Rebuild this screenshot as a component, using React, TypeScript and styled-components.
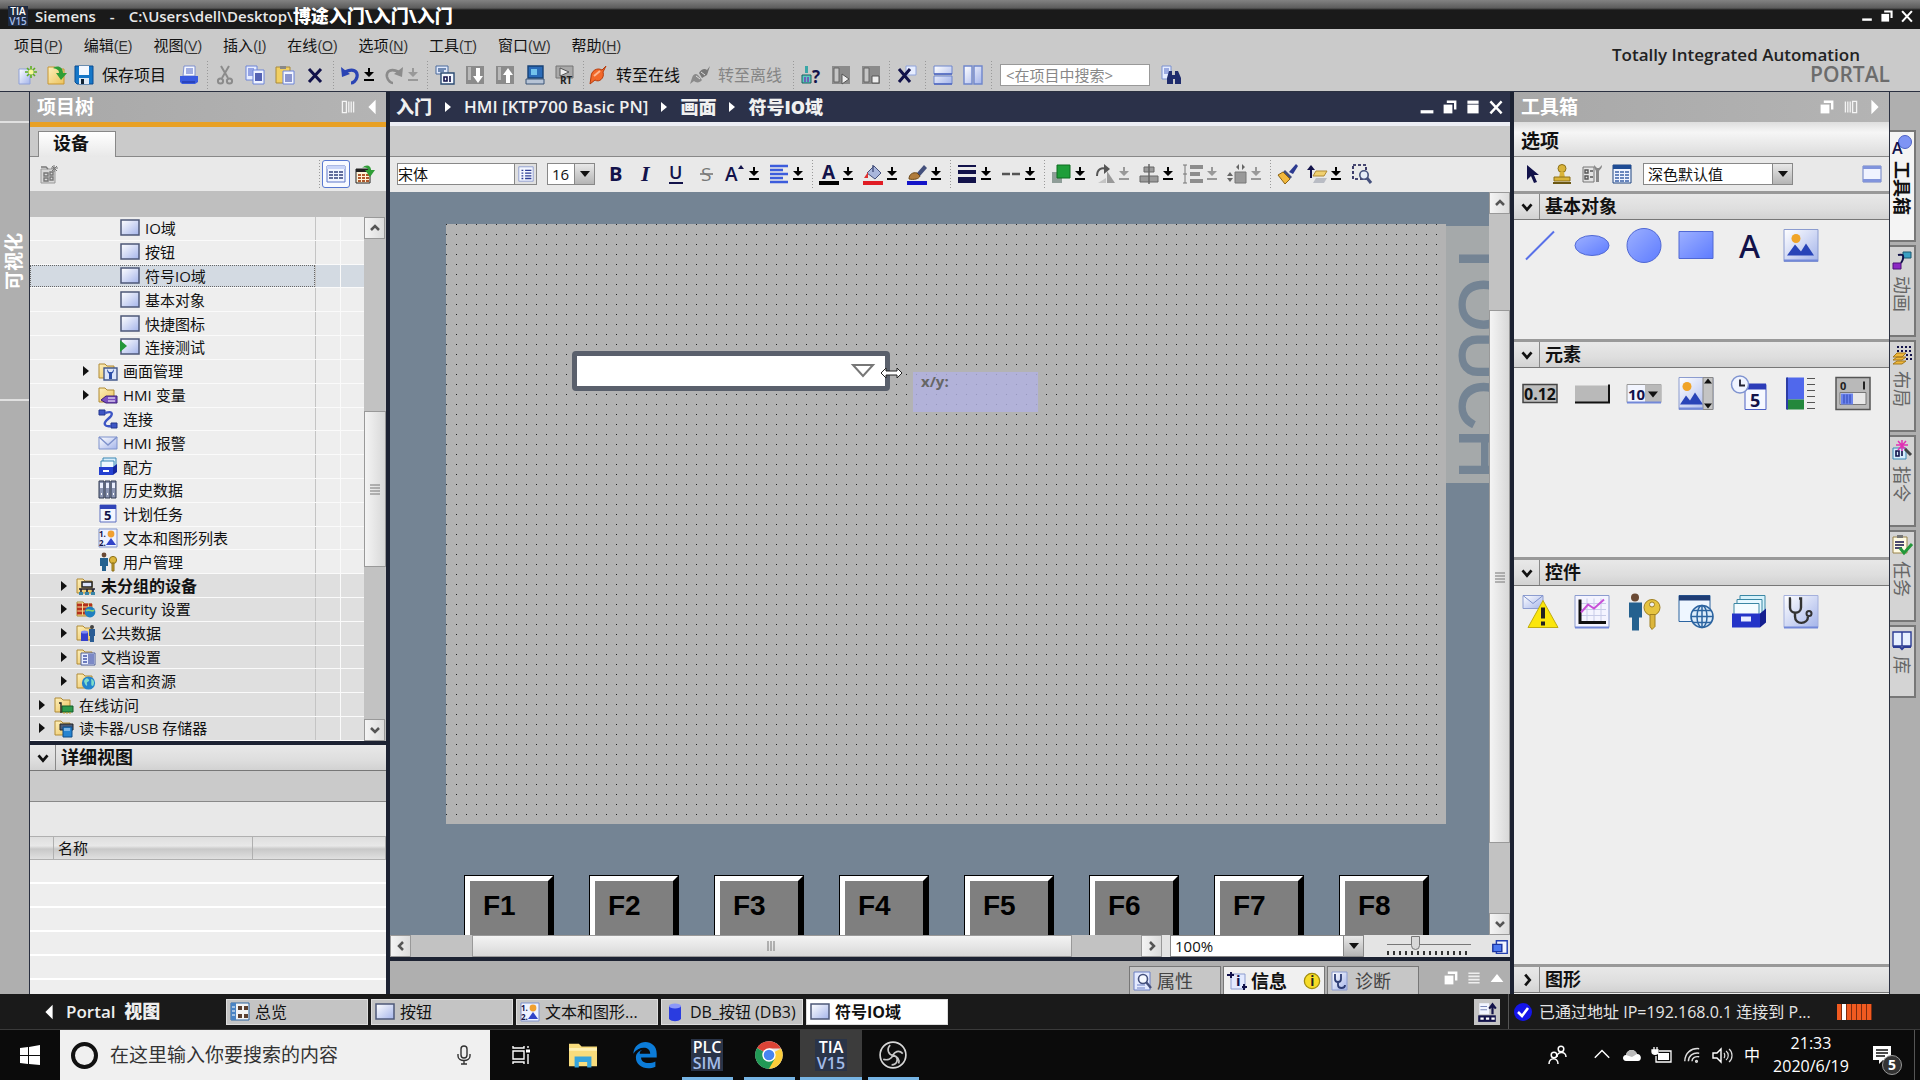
import React from 'react';
import styled, { createGlobalStyle, css } from 'styled-components';

const NAVY = '#12124a';

const Global = createGlobalStyle`
  * { box-sizing: border-box; }
  body {
    margin: 0;
    background: #0b0b0b;
    color: #111;
    font: 16px/20px 'Open Sans', 'Noto Sans CJK SC', sans-serif;
  }
  button, input, select { font: inherit; color: inherit; margin: 0; padding: 0; border: 0; border-radius: 0; background: none; }
  svg { display: block; flex: none; overflow: visible; }
  ul { list-style: none; margin: 0; padding: 0; }
`;

/* ---------- icons ---------- */

const folder = <path d="M1 3h6l2 2h7v12H1z" fill="url(#gFolder)" stroke="#b08a34" />;
const screen = <path d="M1 2h18v15H1z" fill="url(#gScreen)" stroke="#4d5878" strokeWidth="1.5" />;
const grey = '#8b8b8b';

const art: Record<string, React.ReactNode> = {
  newProject: <><path d="M2 4h11v15H2z" fill="url(#gScreen)" stroke="#8ea0d8" /><path d="M14 1v12M8 7h12M10 3l8 8M18 3l-8 8" stroke="#5fae1e" strokeWidth="1.6" /><circle cx="14" cy="7" r="2.5" fill="#fbf89a" /></>,
  openProject: <><path d="M1 2h7l2 2h7v15H1z" fill="url(#gFolder)" stroke="#c79632" /><path d="M6 3c5-3 10-1 10 5h4l-6 7-5-7h3c0-3-2-4-6-5z" fill="#2f9e37" /></>,
  save: <><path d="M1 1h18v18H3l-2-2z" fill="#1677c8" stroke="#0b4d92" /><path d="M5 1h10v9H5z" fill="#f4f8ff" /><path d="M5 13h10v6H5z" fill="#dfe9f5" /><path d="M7 14h3v5H7z" fill="#123" /></>,
  print: <><path d="M5 1h11v10H4z" fill="#f6f8ff" stroke="#7d8fce" /><path d="M7 4h7M7 6h7M7 8h7" stroke="#4c64c4" /><path d="M1 11h18v6l-3 2H3l-2-2z" fill="#3a5be0" /><path d="M3 17h13" stroke="#1b2f98" /></>,
  cut: <g stroke={grey} fill="none" strokeWidth="2"><path d="M6 1l7 12M14 1L7 13" /><circle cx="5.5" cy="16" r="2.6" /><circle cx="14.5" cy="16" r="2.6" /></g>,
  copy: <><path d="M1 1h11v14H1z" fill="#e7edff" stroke="#6d84d8" /><path d="M3 4h6M3 6h6M3 8h6M3 10h6" stroke="#4059c8" /><path d="M8 5h11v14H8z" fill="#eef2ff" stroke="#6d84d8" /><path d="M10 9h7M10 11h7M10 13h7M10 15h7" stroke="#23349c" strokeWidth="1.3" /></>,
  paste: <><path d="M1 2h14v16H1z" fill="#f1cf62" stroke="#a88a3a" /><path d="M5 1h6v3H5z" fill="#888" /><path d="M8 6h11v13H8z" fill="#f2f5ff" stroke="#6d84d8" /><path d="M10 10h7M10 12h7M10 14h7M10 16h7" stroke="#23349c" /></>,
  cross: <path d="M4 4l12 13M16 4L4 17" stroke={NAVY} strokeWidth="3" />,
  undo: <><path d="M5 7c8-4 13-1 12 5-1 4-4 6-6 6" fill="none" stroke="#2a44b4" strokeWidth="3.2" /><path d="M1 2l1 10 8-3z" fill="#2a44b4" /></>,
  redo: <><path d="M15 7C7 3 2 6 3 12c1 4 4 6 6 6" fill="none" stroke={grey} strokeWidth="2.6" /><path d="M19 2l-1 10-8-3z" fill={grey} /></>,
  compile: <><path d="M1 1h12v8H1z" fill="#dfe8fb" stroke="#4b6a9c" /><path d="M3 4h8M3 6h6" stroke="#4b6a9c" strokeWidth="1.5" /><path d="M6 8h13v11H6z" fill="#f4f8ff" stroke="#2c4c74" strokeWidth="1.4" /><path d="M9 12h3v4H9zM15 11v6" fill="none" stroke={NAVY} strokeWidth="1.6" /></>,
  download: <><path d="M1 1h18v18H1z" fill={grey} /><path d="M3 2h3v13H3z" fill="#b9b9b9" /><path d="M11 3h4v8h3l-5 7-5-7h3z" fill="#fff" /></>,
  upload: <><path d="M1 1h18v18H1z" fill={grey} /><path d="M3 2h3v13H3z" fill="#b9b9b9" /><path d="M11 18h4v-8h3l-5-7-5 7h3z" fill="#fff" /></>,
  simulate: <><path d="M3 1h15v12H3z" fill="#2a6bb8" stroke="#174276" strokeWidth="1.4" /><path d="M6 4h6v6H6z" fill="#72c2ec" /><path d="M1 14h18v5H1z" fill="#b7c4d6" stroke="#3b5576" /></>,
  runtime: <><path d="M1 1h17v12H1z" fill="#a9a9a9" stroke="#757575" /><path d="M5 3l9 4-9 4z" fill="#eee" stroke="#555" /><text x="5" y="19" fontSize="10" fontWeight="700" fill="#222" fontFamily="Open Sans">RT</text></>,
  plug: <><path d="M3 12C3 6 9 2 14 5l4-4-3 6c2 6-4 11-8 8l-5 4z" fill="#f2682a" stroke="#b63c0c" /><path d="M6 11l6-5" stroke="#ffb68e" strokeWidth="2" /></>,
  unplug: <><path d="M9 8c2-4 6-5 8-3l3-4-3 9-5 3z" fill="#777" /><path d="M2 13c1-4 4-5 6-3l4 5c-2 3-6 3-8 1l-4 3z" fill={grey} /><path d="M6 11l4 3M11 7l4 3" stroke="#ddd" /></>,
  access: <><path d="M4 1h3v7H4z" fill="#3aa7a7" /><path d="M1 10h9v8H1z" fill="#5bc8c0" stroke="#19605e" /><path d="M4 12v5M7 12v5" stroke="#7a3fb4" strokeWidth="1.5" /><text x="11" y="18" fontSize="17" fontWeight="700" fill={NAVY} fontFamily="Open Sans">?</text></>,
  startCpu: <><path d="M1 1h18v18H1z" fill={grey} /><path d="M3 3h5v14H3z" fill="#c6c6c6" stroke="#666" /><path d="M11 9l7 5-7 5z" fill="#eee" stroke="#555" /></>,
  stopCpu: <><path d="M1 1h18v18H1z" fill={grey} /><path d="M3 3h5v14H3z" fill="#c6c6c6" stroke="#666" /><path d="M11 11h7v7h-7z" fill="#eee" stroke="#555" /></>,
  closeAll: <><path d="M9 1h10v9H9z" fill="#e6edff" stroke="#90a4dc" /><path d="M2 4l11 13M13 4L2 17" stroke={NAVY} strokeWidth="3" /></>,
  splitH: <><path d="M1 1h18v8H1zM1 11h18v8H1z" fill="url(#gScreen)" stroke="#6f86cc" /><path d="M1 9h18M1 19h18" stroke="#4d66c0" strokeWidth="1.5" /></>,
  splitV: <path d="M1 1h8v18H1zM11 1h8v18h-8z" fill="url(#gScreen)" stroke="#6f86cc" strokeWidth="1.4" />,
  binoculars: <><path d="M1 1h9v13H1z" fill="#e6edff" stroke="#7a90d0" /><path d="M3 4h5M3 6h5M3 8h5" stroke="#5069c4" /><path d="M8 6h3v4h3V6h3l3 7v6h-6v-5h-2v5H6v-6z" fill="#1f2c6c" /></>,

  addDevice: <><path d="M2 5h14v14H2z" fill="#d8d8d8" stroke="#999" /><path d="M5 9h4v3H5zM5 14h4v3H5zM11 8h3v3h-3zM11 13h3v3h-3zM2 3h5l2 2" fill="none" stroke="#777" strokeWidth="1.4" /><path d="M15 1v7M12 4h7M13 2l5 5M18 2l-5 5" stroke="#777" /></>,
  details: <><path d="M1 2h18v16H1z" fill="#f3f6ff" stroke="#5c76c8" /><path d="M1 2h18v3H1z" fill="#c9d5f8" /><path d="M3 8h4M8 8h4M13 8h4M3 11h4M8 11h4M13 11h4M3 14h4M8 14h4M13 14h4" stroke="#34417c" strokeWidth="1.6" /></>,
  exportView: <><path d="M1 5h14v14H1z" fill="#fff4d8" stroke="#222" /><path d="M1 5h14v3H1z" fill="#222" /><path d="M3 11h3M7 11h3M11 11h3M3 14h3M7 14h3M11 14h3M3 17h3M7 17h3M11 17h3" stroke="#b0582c" strokeWidth="1.8" /><path d="M7 4c4-4 9-3 9 2h4l-5 7-5-7h3c0-2-2-3-6-2z" fill="#2f9e37" /></>,

  screen,
  startScreen: <>{screen}<path d="M0 3l7 6-7 6z" fill="#23983a" /></>,
  folderTool: <>{folder}<path d="M6 7h13v12H6z" fill="#dbe5fb" stroke="#44598c" strokeWidth="1.4" /><path d="M9 8c0 4 2 4 2 5v5h3v-5c0-1 2-1 2-5l-2 3h-3z" fill="#2d4fa8" /></>,
  folderTag: <>{folder}<path d="M3 15l5-4h11v7H8z" fill="#7a4fc0" stroke="#3b1f78" /><path d="M10 13h7M10 16h7" stroke="#fff" /></>,
  link: <><path d="M1 1h6v5H1zM13 14h6v5h-6z" fill="#3d55c4" stroke="#22368c" /><path d="M7 4c9-3 8 2 3 6-6 5-3 8 3 7" fill="none" stroke="#3d55c4" strokeWidth="2.4" /></>,
  mail: <><path d="M1 4h18v12H1z" fill="url(#gScreen)" stroke="#7f92cc" /><path d="M1 4l9 8 9-8" fill="none" stroke="#7f92cc" strokeWidth="1.4" /></>,
  recipe: <><path d="M5 1h13v10H5z" fill="#d6edfb" stroke="#3b87b4" /><path d="M3 4h13v8H3z" fill="#eef8ff" stroke="#3b87b4" /><path d="M1 10h14v8H1z" fill="#2440d0" /><path d="M15 10l4-3v8l-4 3z" fill="#1427a0" /><path d="M5 13h6v2H5z" fill="#fff" /></>,
  history: <><path d="M1 1h5v17H1zM7 1h5v17H7zM13 1h5v17h-5z" fill="#8b95b2" stroke="#2f3850" /><path d="M2 3h3v5H2zM8 3h3v5H8zM14 3h3v5h-3z" fill="#e9eefc" /><path d="M3 13h1v2H3zM9 13h1v2H9zM15 13h1v2h-1z" fill="#fff" /></>,
  task: <><path d="M2 1h16v17H2z" fill="#f3f6ff" stroke="#5c6fc0" /><path d="M2 1h16v4H2z" fill="#3144b8" /><text x="6" y="16" fontSize="13" fontWeight="700" fill={NAVY} fontFamily="Open Sans">5</text></>,
  lists: <><path d="M1 1h18v18H1z" fill="#eef2ff" stroke="#7f92cc" /><text x="1" y="9" fontSize="8" fontWeight="700" fill={NAVY} fontFamily="Open Sans">1.</text><text x="1" y="18" fontSize="8" fontWeight="700" fill={NAVY} fontFamily="Open Sans">2.</text><circle cx="13" cy="6" r="3.4" fill="#f0a030" /><path d="M8 17l5-7 5 7z" fill="#3144c8" /></>,
  user: <><circle cx="6" cy="3" r="2.4" fill="#6a4a34" /><path d="M2 6h8v8H8v5H4v-5H2z" fill="#24618f" /><circle cx="15" cy="8" r="3.6" fill="#dcb63c" stroke="#8c7018" /><path d="M14 11h2v8h-2z" fill="#c9a22c" stroke="#8c7018" /></>,
  devices: <>{folder}<path d="M6 6h10v5H6z" fill="#dbe5fb" stroke="#222" strokeWidth="1.5" /><path d="M3 13h16M5 13v4M11 13v4M17 13v4" stroke="#223" strokeWidth="1.6" /><path d="M3 16h4v3H3zM9 16h4v3H9zM15 16h4v3h-4z" fill="#3a86a8" /></>,
  security: <>{folder}<path d="M1 6h15M1 10h12M1 14h9" stroke="#b5301c" strokeWidth="3" strokeDasharray="5 1" /><circle cx="14" cy="13" r="5.4" fill="#1f7fc0" /><path d="M10 12c3-3 6 2 8-1" stroke="#8cd06a" strokeWidth="1.6" fill="none" /></>,
  common: <>{folder}<path d="M5 9h7v9H5z" fill="#3440cc" /><ellipse cx="8.500" cy="9" rx="3.5" ry="1.6" fill="#7c88f4" /><circle cx="16" cy="4" r="2" fill="#444" /><path d="M13 6h6v7h-1v6h-4v-6h-1z" fill="#2a5c94" /></>,
  docs: <>{folder}<path d="M5 6h14v12H5z" fill="#e7edff" stroke="#4c5c98" /><path d="M7 9h4M7 12h4M7 15h4M13 7v10M15 7v10M17 7v10" stroke="#4354a8" strokeWidth="1.3" /></>,
  language: <>{folder}<circle cx="12.500" cy="12" r="6.600" fill="#2284cc" /><path d="M8 10c2-4 4-3 5-1s-3 1-2 4-2 2-3-3M15 8c3 0 4 4 2 7-3 0-1-3-2-7" fill="#7fdcc8" /></>,
  online: <>{folder}<path d="M8 11h11v6H8z" fill="#2c9a4c" stroke="#145c28" /><path d="M10 17v2M13 17v2M16 17v2" stroke="#c9a22c" /><path d="M5 8h2v10" stroke="#222" fill="none" strokeWidth="1.4" /></>,
  reader: <>{folder}<path d="M6 6h13v6H6z" fill="#4c5c78" stroke="#222" /><path d="M9 9h9v10H9z" fill="#2684d0" stroke="#0e4c88" /><path d="M11 10v3M13 10v3M15 10v3" stroke="#cfe6fb" /></>,

  bold: <text x="3" y="17" fontSize="20" fontWeight="700" fill={NAVY} fontFamily="Open Sans">B</text>,
  italic: <text x="5" y="17" fontSize="22" fontWeight="700" fontStyle="italic" fill={NAVY} fontFamily="Liberation Serif">I</text>,
  underline: <><text x="3" y="15" fontSize="18" fontWeight="600" fill={NAVY} fontFamily="Open Sans">U</text><path d="M3 19h14" stroke={NAVY} strokeWidth="2" /></>,
  strike: <><text x="5" y="17" fontSize="19" fill="#777" fontFamily="Open Sans">S</text><path d="M4 10h13" stroke="#777" strokeWidth="1.6" /></>,
  grow: <><text x="0" y="17" fontSize="19" fontWeight="600" fill={NAVY} fontFamily="Open Sans">A</text><path d="M13 5l3-4 3 4z" fill={NAVY} /></>,
  align: <path d="M1 2h18M1 6h13M1 10h18M1 14h13M1 18h18" stroke="#3c5cdc" strokeWidth="2.4" />,
  textColor: <><text x="3" y="15" fontSize="19" fontWeight="700" fill={NAVY} fontFamily="Open Sans">A</text><path d="M0 17h20v4H0z" fill="#000" /></>,
  fill: <><path d="M4 9l7-7 7 7-6 6z" fill="#a9b6dc" stroke="#44507c" /><path d="M10 1v7" stroke="#44507c" strokeWidth="1.4" /><path d="M5 8l-4 6h4z" fill="#e03030" /><path d="M0 17h20v4H0z" fill="#e01c24" /></>,
  pen: <><path d="M10 9l7-8 3 3-7 8z" fill="#44507c" /><path d="M2 15c0-5 4-7 8-6l3 3c-1 3-6 4-11 3z" fill="#b07c3c" stroke="#6c4818" /><path d="M0 17h20v4H0z" fill="#1414c8" /></>,
  lineWidth: <><path d="M1 2h18" stroke={NAVY} strokeWidth="2" /><path d="M1 8h18" stroke={NAVY} strokeWidth="4" /><path d="M1 16h18" stroke={NAVY} strokeWidth="6" /></>,
  dash: <path d="M1 10h8M11 10h8" stroke="#555" strokeWidth="2.4" />,
  order: <><path d="M1 8h10v11H1z" fill="#8f9d98" /><path d="M6 1h13v13H6z" fill="#1f9e3a" stroke="#0f6c20" /></>,
  rotate: <><path d="M2 12C2 5 7 3 11 5" fill="none" stroke="#555" strokeWidth="2" /><path d="M9 0l6 5-6 5z" fill="#555" /><path d="M12 7l8 12h-8z" fill="#999" /><path d="M3 19h8v-5z" fill="#c4c4c4" /></>,
  alignObj: <><path d="M5 3h10v5H5zM1 12h18v6H1z" fill="#9a9a9a" stroke="#666" /><path d="M10 0v20" stroke="#666" strokeWidth="1.5" /></>,
  distribute: <><path d="M2 1v18M0 1h4M0 10h4M0 19h4" stroke="#777" /><path d="M7 3h13M7 10h10M7 17h13" stroke="#8d8d8d" strokeWidth="4" /></>,
  sameSize: <><path d="M8 8h11v11H8z" fill="#999" stroke="#777" /><path d="M9 3l3-3v6zM18 3l-3-3v6zM3 8l3 4H0zM3 18l3-4H0z" fill="#666" /></>,
  brush: <><path d="M11 8l7-8 2 2-5 8z" fill="#2c3a90" /><path d="M7 6l7 7-2 2-7-7z" fill="#44507c" /><path d="M5 8l7 7-5 5-7-9z" fill="#f2b83c" stroke="#8c6414" /></>,
  layerUp: <><path d="M4 14V4" stroke={NAVY} strokeWidth="2" /><path d="M0 6l4-5 4 5z" fill={NAVY} /><path d="M9 7h11l-3 5H6z" fill="#f0d070" stroke="#b08a34" /><path d="M9 14h11l-3 5H6z" fill="#b9bcc4" /></>,
  zoomArea: <><path d="M1 1h13v14H1z" fill="none" stroke={NAVY} strokeWidth="1.6" strokeDasharray="3 2" /><circle cx="12" cy="11" r="4.200" fill="#e5ecf8" stroke="#44507c" strokeWidth="1.6" /><path d="M15 14l4 5" stroke="#44507c" strokeWidth="3" /></>,
  fontList: <><path d="M2 2h16v16H2z" fill="#f3f6ff" stroke="#8c9ccf" /><path d="M5 6h2M5 9h2M5 12h2M5 15h2M9 6h7M9 9h7M9 12h7M9 15h7" stroke="#2c3c94" strokeWidth="1.4" /></>,

  pointer: <path d="M5 1v15l4-4 3 7 3-1-3-7h5z" fill={NAVY} />,
  stamp: <><circle cx="10" cy="4.500" r="4" fill="#d9b43a" stroke="#8c7018" /><path d="M8 8h4l1 6h-6z" fill="#d9b43a" /><path d="M2 13h16v4H2z" fill="#d9b43a" stroke="#8c7018" /><path d="M1 19h18" stroke="#6c5814" strokeWidth="2" /></>,
  wrench: <><path d="M1 3h11v15H1z" fill="#e4e4e4" stroke="#777" /><path d="M3 6h3v3H3zM3 12h3v3H3zM8 7h3M8 13h3" fill="none" stroke="#555" strokeWidth="1.4" /><path d="M12 1c0 5 2 4 2 7v10h3V8c0-3 3-2 3-7l-3 3h-2z" fill="#888" /></>,
  tableView: <><path d="M1 1h18v18H1z" fill="#eef3ff" stroke="#1e4480" /><path d="M1 1h18v4H1z" fill="#1e4c94" /><path d="M3 8h4M8 8h4M13 8h4M3 11h4M8 11h4M13 11h4M3 14h4M8 14h4M13 14h4M3 17h4M8 17h4M13 17h4" stroke="#3c63a8" strokeWidth="1.6" /></>,
  pane: <><path d="M1 2h18v16H1z" fill="#f0f3ff" stroke="#6c80c4" /><path d="M1 2h18v3H1zM1 15h18v3H1z" fill="#8194dc" /></>,
  tabToolbox: <><circle cx="13" cy="7" r="6.500" fill="#7e94f4" stroke="#4c60c4" /><text x="0" y="19" fontSize="16" fontWeight="600" fill={NAVY} fontFamily="Open Sans">A</text></>,
  tabAnim: <><path d="M11 2h8v6h-8z" fill="#3aa0c4" stroke="#1a5870" /><path d="M6 5c8-2 5 5 3 8" fill="none" stroke={NAVY} strokeWidth="2" /><path d="M1 13h8v6H1z" fill="#8c28c4" stroke="#4c1078" /></>,
  tabLayout: <><path d="M5 2h15M5 6h15M10 10h10M14 14h6" stroke={NAVY} strokeWidth="2" strokeDasharray="2 2" /><path d="M1 12l4-4h9l-4 4zM1 15l4-3h9l-4 3zM1 19l4-3h9l-4 3z" fill="#f0b83c" stroke="#a4781c" /></>,
  tabInstr: <><path d="M1 8h13v11H1z" fill="#d6edfb" stroke="#3b87b4" /><path d="M4 11h3v5H4zM10 11v5" fill="none" stroke={NAVY} strokeWidth="1.6" /><path d="M10 0v11M4 5h12M6 1l8 9M14 1l-8 9" stroke="#e030b4" strokeWidth="1.5" /><path d="M13 9l6 6" stroke="#444" strokeWidth="3" /></>,
  tabTask: <><path d="M1 2h14v16H1z" fill="#fffbe4" stroke="#99834a" /><path d="M5 0h6v3H5z" fill="#777" /><path d="M3 7h9M3 10h9M3 13h7" stroke={NAVY} strokeWidth="1.6" /><path d="M8 13l4 5 8-9" fill="none" stroke="#23983a" strokeWidth="3" /></>,
  tabLib: <><path d="M1 2h9v14H1zM10 2h9v14h-9z" fill="#e7f0ff" stroke="#2c3c94" strokeWidth="1.4" /><path d="M1 17h7l2 2 2-2h7" fill="none" stroke="#2c3c94" strokeWidth="2" /></>,

  properties: <><path d="M1 1h16v18H1z" fill="#e4eaff" stroke="#6c80c4" /><path d="M4 14h8M4 17h8" stroke="#6c80c4" /><circle cx="10" cy="8" r="4.500" fill="#f6f9ff" stroke="#44507c" strokeWidth="1.6" /><path d="M13 11l5 6" stroke="#44507c" strokeWidth="2.4" /></>,
  info: <><path d="M4 3h14v15H4z" fill="#e4eaff" stroke="#8c9ccf" /><text x="9" y="15" fontSize="15" fontWeight="700" fill={NAVY} fontFamily="Open Sans">i</text><path d="M0 4h7M4 1v6M15 16h5M17 13v6" stroke={NAVY} strokeWidth="2" /></>,
  infoBadge: <><circle cx="10" cy="10" r="8.500" fill="#f6dc28" stroke="#a08c10" strokeWidth="1.4" /><text x="8" y="16" fontSize="15" fontWeight="700" fill="#222" fontFamily="Open Sans">i</text></>,
  diagnose: <><path d="M1 1h15v18H1z" fill="url(#gScreen)" stroke="#8c9ccf" /><path d="M4 3v5c0 4 6 4 6 0V3M7 11v3c0 4 7 4 7 0" fill="none" stroke="#2c3c74" strokeWidth="1.8" /></>,
  overview: <><path d="M1 1h18v17H1z" fill="#f4f4f4" stroke="#2c64a0" /><path d="M1 1h5v17H1z" fill="#4a84c4" /><path d="M2 5h3M2 9h3M2 13h3" stroke="#fff" /><path d="M8 4h4v4H8zM14 4h4v4h-4zM8 12h4v4H8zM14 12h4v4h-4z" fill="#5c4030" /></>,
  database: <><path d="M4 4h12v13c-3 3-9 3-12 0z" fill="#2a3ce0" /><ellipse cx="10" cy="4" rx="6" ry="2.500" fill="#8c98f8" /></>,
  fitView: <><path d="M6 2h12v14H6z" fill="#f2f5ff" stroke="#2440b0" strokeWidth="1.6" /><path d="M2 6h10v8H2z" fill="#4c78f0" stroke="#1c34a0" strokeWidth="1.6" /></>,
  switcher: <><path d="M3 2h9v10H3z" fill="#f2f5ff" /><path d="M4 5h6M4 8h6" stroke="#7a88b8" /><path d="M2 13h16v6H2z" fill={NAVY} /><path d="M4 16h3M9 16h3M14 16h3" stroke="#fff" strokeWidth="2" /><path d="M15 12V4M12 7l3-4 3 4" stroke={NAVY} fill="none" strokeWidth="2" /></>,
  check: <><circle cx="10" cy="10" r="9" fill="#1414e8" /><path d="M5 10l4 4 6-8" fill="none" stroke="#fff" strokeWidth="2.600" /></>,

  float: <><path d="M6 2h12v11h-3v-8H6z" fill="#fff" /><path d="M2 7h11v11H2z" fill="#fff" /></>,
  autoHide: <path d="M3 3h5v14H3zM11 3v14M14 3v14M17 3v14" fill="none" stroke="#f4f4f4" strokeWidth="1.6" />,
  autoHideR: <path d="M12 3h5v14h-5zM9 3v14M6 3v14M3 3v14" fill="none" stroke="#f4f4f4" strokeWidth="1.6" />,
  rows: <path d="M3 4h14M3 8h14M3 12h14M3 16h14" stroke="#eee" strokeWidth="2" />,
  left: <path d="M14 2v16L6 10z" fill="#fff" />,
  right: <path d="M6 2v16l8-8z" fill="#fff" />,
  up: <path d="M2 15h16L10 5z" fill="#fff" />,
  minimize: <path d="M2 14h16v4H2z" fill="#fff" />,
  maximize: <><path d="M3 2h14v4H3z" fill="#fff" /><path d="M3 7h14v11H3z" fill="#fff" /></>,
  close: <path d="M3 3l14 15M17 3L3 18" stroke="#fff" strokeWidth="3" />,
  chevDown: <path d="M5 7l5 6 5-6" fill="none" stroke="#111" strokeWidth="3" />,
  chevRight: <path d="M8 4l5 6-5 6" fill="none" stroke="#111" strokeWidth="3" />,

  people: <g fill="none" stroke="#fff" strokeWidth="1.5"><circle cx="13" cy="4" r="2.800" /><path d="M9 12c0-6 9-6 9 0" /><circle cx="6" cy="10" r="2.800" /><path d="M1 19c0-7 9-7 9 0" /></g>,
  caret: <path d="M2 13l8-8 8 8" fill="none" stroke="#fff" strokeWidth="1.6" />,
  cloud: <><path d="M4 16c-4 0-4-6 0-6 1-6 9-7 11-1 5 0 5 7 1 7z" fill="#fff" /><path d="M4 10c1-6 9-7 11-1l-5 3z" fill="#bbb" /></>,
  battery: <><path d="M6 8h11v7H6z" fill="#fff" /><path d="M7 6h12v11H4v-6" fill="none" stroke="#fff" strokeWidth="1.300" /><path d="M0 5h6v2c0 3-6 3-6 0zM2 2v3M5 2v3" fill="#fff" stroke="#fff" strokeWidth="1.300" /></>,
  wifi: <g fill="none" stroke="#ddd" strokeWidth="1.6"><path d="M2 17C2 8 9 2 18 3M6 17c0-6 5-10 12-9M10 17c0-3 3-6 8-5" /><circle cx="15" cy="17" r="1" /></g>,
  volume: <><path d="M1 8h4l4-4v13l-4-4H1z" fill="none" stroke="#fff" strokeWidth="1.4" /><path d="M12 8c1 1 1 4 0 5M14 6c3 2 3 7 0 9M17 4c4 3 4 10 0 13" fill="none" stroke="#ddd" strokeWidth="1.2" /></>,
  windows: <path d="M0 3l8-1v8H0zM9 2l11-2v10H9zM0 11h8v8l-8-1zM9 11h11v9L9 19z" fill="#fff" />,
  mic: <><rect x="7" y="1" width="6" height="12" rx="3" fill="none" stroke="#333" strokeWidth="1.4" /><path d="M4 9v2c0 6 12 6 12 0V9M10 15v4M7 19h6" fill="none" stroke="#333" strokeWidth="1.4" /></>,
  taskView: <g fill="none" stroke="#fff" strokeWidth="1.400"><path d="M2 6h11v8H2zM2 1v2h11V1M2 19v-2h11v2M17 1v2M17 9v10" /><path d="M15 6h4" strokeWidth="3" /></g>,
  explorer: <><path d="M0 2h7l2 2h11v14H0z" fill="#f8dc7c" /><path d="M0 5h20v2H0z" fill="#fdf0b4" /><path d="M4 11h12v8h-3v-4H7v4H4z" fill="#36a4dc" /></>,
  edge: <path d="M1 9C2-3 19-3 19 9v3H7c0 5 7 5 11 3v4C11 22 3 19 3 12c0-3 2-5 5-6-2 1-2 2-2 3h8c0-6-9-6-13 0z" fill="#0c7cd8" />,
  chrome: <><circle cx="10" cy="10" r="9.800" fill="#e5e5e5" /><path d="M10 10L1.500 5A9.800 9.800 0 0 1 18.600 5.300H10z" fill="#dc4437" /><path d="M10 10l8.600-4.700A9.800 9.800 0 0 1 10 19.800z" fill="#fccd3a" /><path d="M10 10L1.500 5A9.800 9.800 0 0 0 10 19.800l4-7z" fill="#229a56" /><circle cx="10" cy="10" r="4.800" fill="#fff" /><circle cx="10" cy="10" r="3.800" fill="#4784f0" /></>,
  obs: <><circle cx="10" cy="10" r="9.200" fill="#0e0e0e" stroke="#d8d8d8" strokeWidth="1.200" /><path d="M8 3c-3 3-1 7 2 7 3 1 5 3 4 6M17 9c-3-3-6-1-7 1-1 3-4 4-7 3M9 17c4 0 5-4 3-6" fill="none" stroke="#c8c8c8" strokeWidth="1.200" /></>,
  notify: <><path d="M1 1h18v14h-8l-4 4v-4H1z" fill="#fff" /><path d="M4 5h12M4 8h12M4 11h9" stroke="#111" strokeWidth="1.400" /></>,
};

const big: Record<string, React.ReactNode> = {
  line: <path d="M4 32L32 4" stroke="#5870e8" strokeWidth="2" />,
  ellipse: <ellipse cx="18" cy="18" rx="17" ry="10" fill="url(#gBlue)" stroke="#5068d4" />,
  circle: <circle cx="18" cy="18" r="17" fill="url(#gBlue)" stroke="#5068d4" />,
  rect: <path d="M1 4h34v27H1z" fill="url(#gBlue)" stroke="#5068d4" />,
  text: <text x="8" y="30" fontSize="32" fill={NAVY} fontFamily="Noto Sans" fontWeight="500">A</text>,
  picture: <><path d="M1 2h34v32H1z" fill="url(#gScreen)" stroke="#8c9ccf" /><circle cx="13" cy="11" r="4.500" fill="#f0a428" /><path d="M4 28l8-11 6 7 5-8 8 12z" fill="#2844b8" /><path d="M1 33h34" stroke="#7288d8" strokeWidth="2" /></>,
  ioField: <><path d="M1 9h34v18H1z" fill="#bdbdbd" stroke="#444" strokeWidth="1.500" /><text x="2" y="24" fontSize="16" fontWeight="700" fill="#111" fontFamily="Open Sans">0.12</text></>,
  button: <><path d="M1 9h34v18H1z" fill="#b9b9b9" /><path d="M1 9h34" stroke="#eee" strokeWidth="2" /><path d="M1 27h34V9" fill="none" stroke="#111" strokeWidth="2" /></>,
  symbolic: <><path d="M1 9h34v18H1z" fill="#f2f5ff" stroke="#999" /><path d="M19 9h16v18H19z" fill="#b9b9b9" /><path d="M22 16h10l-5 6z" fill="#111" /><text x="2" y="24" fontSize="15" fontWeight="700" fill={NAVY} fontFamily="Open Sans">10</text><path d="M1 27h34" stroke="#7288d8" strokeWidth="2" /></>,
  graphicIo: <><path d="M1 2h34v32H1z" fill="url(#gScreen)" stroke="#8c9ccf" /><circle cx="9" cy="11" r="4.500" fill="#f0a428" /><path d="M2 29l6-9 4 5 5-8 8 12z" fill="#2844b8" /><path d="M25 2h10v32H25z" fill="#c4c4c4" stroke="#888" /><path d="M26 8l4-5 4 5zM26 28l4 5 4-5z" fill="#111" /><path d="M1 33h24" stroke="#7288d8" strokeWidth="2" /></>,
  dateTime: <><path d="M14 9h21v25H14z" fill="#f6f8ff" stroke="#4c60c4" /><path d="M14 8h21v6H14z" fill="#2c3cb8" /><circle cx="9" cy="9" r="8.500" fill="#f0f4ff" stroke="#8094d0" strokeWidth="1.500" /><path d="M9 4v6h5" fill="none" stroke="#223" strokeWidth="1.800" /><text x="19" y="31" fontSize="18" fontWeight="700" fill={NAVY} fontFamily="Open Sans">5</text></>,
  bar: <><path d="M4 2h17v22H4z" fill="#5068ec" /><path d="M4 24h17v10H4z" fill="#23883c" /><path d="M4 2v32" stroke="#2c3ca4" strokeWidth="2" /><path d="M24 3h8M24 9h8M24 15h8M24 21h8M24 27h8M24 33h8" stroke="#555" strokeWidth="1.200" /></>,
  toggle: <><path d="M1 2h34v32H1z" fill="#b9b9b9" stroke="#555" strokeWidth="1.500" /><text x="5" y="14" fontSize="11" fontWeight="700" fill="#222" fontFamily="Open Sans">0</text><path d="M29 6v8" stroke="#222" strokeWidth="2" /><path d="M5 17h26v12H5z" fill="#e8e8e8" stroke="#777" /><path d="M6 18h12v11H6z" fill="#6c84ec" /><path d="M9 19v9M12 19v9M15 19v9" stroke="#2c44b4" /></>,
  alarm: <><path d="M1 2h20v13H1z" fill="url(#gScreen)" stroke="#8c9ccf" /><path d="M1 2l10 8 10-8" fill="none" stroke="#7f92cc" /><path d="M21 7l15 27H6z" fill="#fbe60c" stroke="#c0ac10" /><path d="M21 14v11M21 28v4" stroke="#222" strokeWidth="4" /></>,
  trend: <><path d="M1 2h34v32H1z" fill="#f4f4ff" stroke="#8c9ccf" /><path d="M6 10h26M6 16h26M6 22h26M13 5v24M20 5v24M27 5v24" stroke="#c8cce8" /><path d="M6 6v23h26" fill="none" stroke="#111" strokeWidth="3" /><path d="M7 19l7-8 6 4 10-9" fill="none" stroke="#c850d8" strokeWidth="2" /><path d="M1 34h34" stroke="#7288d8" strokeWidth="2" /></>,
  users: <><circle cx="9" cy="4" r="4" fill="#6a4a34" /><path d="M3 9h13v15h-3v13H6V24H3z" fill="#24618f" /><circle cx="26" cy="14" r="8" fill="#e6c440" stroke="#a08020" /><circle cx="26" cy="11" r="2.500" fill="#eee" stroke="#a08020" /><path d="M24 21h5v12l-3 3-2-3z" fill="#dcb63c" stroke="#a08020" /></>,
  browser: <><path d="M1 2h31v26H1z" fill="#eef6ff" stroke="#2c64a0" /><path d="M1 2h31v5H1z" fill="#1e3c74" /><circle cx="24" cy="23" r="11" fill="#dcecfb" stroke="#2c64a0" strokeWidth="1.600" /><ellipse cx="24" cy="23" rx="5" ry="11" fill="none" stroke="#2c64a0" strokeWidth="1.500" /><path d="M13 23h22M15 17h18M15 29h18M24 12v22" stroke="#2c64a0" strokeWidth="1.500" /></>,
  recipeView: <><path d="M9 2h25v18H9z" fill="#d6f2fb" stroke="#3b87a4" /><path d="M6 6h25v16H6z" fill="#e6f8ff" stroke="#3b87a4" /><path d="M3 10h25v14H3z" fill="#f4fcff" stroke="#3b87a4" /><path d="M1 20h28v14H1z" fill="#2434c8" /><path d="M29 20l6-5v14l-6 5z" fill="#141f90" /><path d="M10 23h10v5H10z" fill="#e8ecff" /></>,
  diagView: <><path d="M1 2h34v32H1z" fill="url(#gScreen)" stroke="#a4b0dc" /><path d="M8 5H7v9c0 7 11 7 11 0V5h-2M12 19v4c0 9 13 8 13 0" fill="none" stroke="#333" strokeWidth="2.400" /><circle cx="26" cy="20" r="2.500" fill="none" stroke="#333" strokeWidth="2" /><path d="M1 34h34" stroke="#7288d8" strokeWidth="2" /></>,
};

const Ico = ({ n, s = 20 }: { n: string; s?: number }) => (
  <svg width={s} height={s} viewBox="0 0 20 20" aria-hidden="true">{art[n]}</svg>
);
const BigIco = ({ n }: { n: string }) => (
  <svg width="36" height="38" viewBox="0 0 36 37" aria-hidden="true">{big[n]}</svg>
);
const HiddenSvg = styled.svg`position: absolute;`;
const Gradients = () => (
  <HiddenSvg width="0" height="0" aria-hidden="true">
    <defs>
      <linearGradient id="gScreen" x1="0" y1="0" x2="1" y2="1"><stop offset="0" stopColor="#ffffff" /><stop offset="1" stopColor="#a4b4ea" /></linearGradient>
      <linearGradient id="gBlue" x1="0" y1="0" x2="1" y2="1"><stop offset="0" stopColor="#9db0ff" /><stop offset="1" stopColor="#5e7cff" /></linearGradient>
      <linearGradient id="gFolder" x1="0" y1="0" x2="1" y2="1"><stop offset="0" stopColor="#fdf0bc" /><stop offset="1" stopColor="#ecc25c" /></linearGradient>
    </defs>
  </HiddenSvg>
);

/* ---------- shared parts ---------- */

const IconButton = styled.button<{ $w?: number }>`
  width: ${p => p.$w ?? 30}px;
  height: 26px;
  flex: none;
  display: flex;
  align-items: center;
  justify-content: center;
`;
const Sep = styled.span`
  width: 6px;
  height: 28px;
  flex: none;
  background: repeating-linear-gradient(#999 0 1px, transparent 1px 3px) 3px 0 / 1px 100% no-repeat;
`;
const Drop = ({ off }: { off?: boolean }) => (
  <svg width="10" height="14" viewBox="0 0 10 14" aria-hidden="true">
    <path d="M4 0h2v4h4L5 9 0 4h4zM0 11h10v2H0z" fill={off ? '#999' : '#000'} />
  </svg>
);
const Caret = () => <svg width="10" height="6" viewBox="0 0 10 6" aria-hidden="true"><path d="M0 0h10L5 6z" fill="#111" /></svg>;

const Combo = styled.div<{ $w: number }>`
  width: ${p => p.$w}px;
  height: 22px;
  flex: none;
  display: grid;
  grid-template-columns: 1fr 20px;
  background: #fff;
  border: 1px solid #888;
  select { grid-area: 1 / 1 / 2 / 3; appearance: none; padding-left: 4px; font-size: 15px; line-height: 20px; outline: 0; min-width: 0; }
`;
const ComboArrow = styled.span`
  grid-area: 1 / 2;
  display: flex;
  align-items: center;
  justify-content: center;
  pointer-events: none;
  background: linear-gradient(#e8e8e8, #b4b4b4);
  border-left: 1px solid #888;
`;
const ComboBox = ({ w, label, value }: { w: number; label: string; value: string }) => (
  <Combo $w={w}>
    <select aria-label={label} defaultValue={value}><option>{value}</option></select>
    <ComboArrow><Caret /></ComboArrow>
  </Combo>
);

/* ---------- window frame ---------- */

const Window = styled.div`
  height: 100vh;
  display: flex;
  flex-direction: column;
`;
const TitleBar = styled.header`
  height: 29px;
  flex: none;
  display: flex;
  align-items: center;
  padding: 2px 3px 0 8px;
  background: linear-gradient(#828282, #5c5c5c 8px, #1a1a1a 10px);
  color: #e8e8e8;
  font-size: 15px;
  font-weight: 600;
  white-space: pre;
`;
const TitleText = styled.span`display: flex; gap: 14px; margin-left: 7px;`;
const TitlePath = styled.b`font-size: 18px; line-height: 18px; color: #fff; flex: 1;`;
const WinButton = styled.button`
  width: 20px;
  height: 20px;
  display: flex;
  align-items: center;
  justify-content: center;
`;
const Tile = styled.span<{ $small?: boolean }>`
  width: ${p => (p.$small ? 20 : 32)}px;
  flex: none;
  display: flex;
  flex-direction: column;
  align-items: center;
  background: ${p => (p.$small ? '#1e2a40' : '#2a3448')};
  font-size: ${p => (p.$small ? 10 : 16)}px;
  line-height: ${p => (p.$small ? 10 : 16)}px;
  font-weight: 600;
  color: #fff;
  span + span { color: #a4bce8; }
`;

const TopArea = styled.div`
  height: 63px;
  flex: none;
  display: flex;
  background: #cacaca;
  border-bottom: 1px solid #2a3040;
`;
const Commands = styled.div`flex: 1; min-width: 0;`;
const MenuBar = styled.nav`
  height: 31px;
  display: flex;
  align-items: center;
  gap: 21px;
  padding: 2px 0 0 14px;
`;
const MenuItem = styled.button`
  white-space: nowrap;
  font-size: 15px;
  span { font-family: 'Liberation Sans', sans-serif; font-size: 14px; color: #333; }
  u { text-underline-offset: 2px; }
`;
const ToolBar = styled.div`
  height: 30px;
  display: flex;
  align-items: center;
  padding-left: 12px;
`;
const TextButton = styled.button<{ $off?: boolean }>`
  height: 26px;
  display: flex;
  align-items: center;
  gap: 8px;
  padding: 0 8px 0 2px;
  white-space: nowrap;
  color: ${p => (p.$off ? '#858585' : '#111')};
`;
const Search = styled.input`
  width: 150px;
  height: 22px;
  margin: 0 6px 0 6px;
  padding-left: 5px;
  background: #fff;
  border: 1px solid #999;
  font-size: 15px;
  &::placeholder { color: #888; opacity: 1; }
`;
const Brand = styled.div`
  display: flex;
  flex-direction: column;
  align-items: flex-end;
  padding: 16px 30px 0 0;
  font-weight: 600;
  color: #222;
`;
const BrandName = styled.div`font-size: 17px; line-height: 20px; padding-right: 30px;`;
const BrandPortal = styled.div`font-size: 21px; line-height: 18px; color: #6c6c6c;`;

const Workspace = styled.main`
  flex: 1;
  min-height: 0;
  display: grid;
  grid-template-columns: 30px 356px minmax(0, 1fr) 376px 30px;
  grid-template-rows: minmax(0, 1fr);
`;

/* ---------- left strip and project tree ---------- */

const LeftStrip = styled.aside`
  background: #afafaf;
  border-right: 1px solid #2a3040;
  display: flex;
  flex-direction: column;
`;
const StripTop = styled.div`height: 31px; border-bottom: 2px solid #e0e0e0;`;
const StripTab = styled.button`
  height: 278px;
  padding-right: 2px;
  border-bottom: 2px solid #e0e0e0;
  color: #fff;
  font-size: 19px;
  font-weight: 600;
  writing-mode: vertical-rl;
  text-orientation: sideways;
  span { display: block; transform: rotate(180deg); }
`;

const TreePanel = styled.section`
  display: flex;
  flex-direction: column;
  min-height: 0;
`;
const PanelHead = styled.div<{ $orange?: boolean }>`
  height: ${p => (p.$orange ? 35 : 30)}px;
  flex: none;
  display: flex;
  align-items: center;
  padding: 0 4px 0 7px;
  background: linear-gradient(90deg, #a8a8a8, #b4b4b4);
  color: #fff;
  font-size: 19px;
  font-weight: 700;
  ${p => p.$orange && css`border-bottom: 5px solid #e8a024;`}
  h2 { flex: 1; margin: 0; font: inherit; }
`;
const HeadButton = styled(WinButton)`margin-left: 4px;`;
const TabRow = styled.div`
  height: 30px;
  flex: none;
  display: flex;
  align-items: flex-end;
  padding-left: 8px;
  background: #cacaca;
  border-bottom: 1px solid #888;
`;
const DeviceTab = styled.button`
  width: 78px;
  height: 26px;
  margin-bottom: -1px;
  padding: 0 14px 3px;
  text-align: left;
  font-size: 18px;
  font-weight: 700;
  background: linear-gradient(#fff, #e8e8e8);
  border: 1px solid #888;
  border-bottom: 0;
`;
const TreeTools = styled.div`
  height: 34px;
  flex: none;
  display: flex;
  align-items: center;
  padding: 0 6px 0 4px;
  background: #e9e9e9;
`;
const Grow = styled.span`flex: 1;`;
const Pressed = styled(IconButton)`
  height: 28px;
  width: 28px;
  border: 1px solid #5878d0;
  border-radius: 3px;
  background: #f8faff;
`;
const TreeGap = styled.div`height: 26px; flex: none; background: #bfbfbf;`;
const TreeBody = styled.div`
  flex: 1;
  min-height: 0;
  display: grid;
  grid-template-columns: 1fr 22px;
  grid-template-rows: minmax(0, 1fr);
`;
const Tree = styled.ul`
  display: flex;
  flex-direction: column;
  background: #fff;
`;
const Row = styled.li<{ $tone: 'light' | 'dark' | 'selected' }>`
  flex: 1 1 0;
  min-height: 0;
  display: grid;
  grid-template-columns: 1fr 25px 24px;
  grid-template-rows: minmax(0, 1fr);
  background: ${p => ({ light: '#eeeeee', dark: '#dfdfdf', selected: '#d3dae2' }[p.$tone])};
  border-bottom: 1px solid #fafafa;
  i { border-left: 1px solid #fafafa; }
  i:nth-child(2) { border-left-color: #c4c4c4; }
`;
const RowLabel = styled.div<{ $level: number; $strong?: boolean; $selected?: boolean }>`
  display: flex;
  align-items: center;
  padding-left: ${p => 9 + p.$level * 22}px;
  font-size: ${p => (p.$strong ? 16 : 15)}px;
  font-weight: ${p => (p.$strong ? 700 : 400)};
  white-space: nowrap;
  min-height: 0;
  ${p => p.$selected && css`outline: 1px dotted #666; outline-offset: -1px;`}
`;
const Twisty = styled.span`width: 15px; height: 10px; flex: none;`;
const RowText = styled.span`margin-left: 5px; line-height: 20px;`;

const ScrollTrack = styled.div<{ $row?: boolean }>`
  display: flex;
  flex-direction: ${p => (p.$row ? 'row' : 'column')};
  background: #c2c2c2;
  min-width: 0;
`;
const ScrollBtn = styled.button`
  width: 21px;
  height: 22px;
  flex: none;
  display: flex;
  align-items: center;
  justify-content: center;
  background: linear-gradient(90deg, #f4f4f4, #dcdcdc);
  border: 1px solid #999;
`;
const Thumb = styled.div<{ $before: number; $size: number; $after: number; $row?: boolean }>`
  flex: 1;
  min-width: 0;
  min-height: 0;
  display: grid;
  grid-template-${p => (p.$row ? 'columns' : 'rows')}: ${p => p.$before}fr ${p => p.$size}fr ${p => p.$after}fr;
  span {
    grid-${p => (p.$row ? 'column' : 'row')}: 2;
    display: flex;
    align-items: center;
    justify-content: center;
    background: linear-gradient(${p => (p.$row ? '180deg' : '90deg')}, #f4f4f4, #d8d8d8);
    border: 1px solid #999;
  }
`;
const Arrow = ({ d }: { d: string }) => (
  <svg width="12" height="12" viewBox="0 0 12 12" aria-hidden="true"><path d={d} fill="none" stroke="#555" strokeWidth="2.500" /></svg>
);
const UP = 'M2 8l4-4 4 4', DOWN = 'M2 4l4 4 4-4', LEFT = 'M8 2L4 6l4 4', RIGHT = 'M4 2l4 4-4 4';
const Grip = ({ row }: { row?: boolean }) => (
  <svg width="10" height="10" viewBox="0 0 10 10" aria-hidden="true">
    <path d={row ? 'M1 0v10M4 0v10M7 0v10' : 'M0 1h10M0 4h10M0 7h10M0 10h10'} stroke="#777" />
  </svg>
);

/* ---------- detail view ---------- */

const Detail = styled.section`
  border-top: 4px solid #1c2232;
  height: 253px;
  flex: none;
  display: flex;
  flex-direction: column;
  background: #eee;
`;
const SectionHead = styled.div`
  height: 26px;
  flex: none;
  display: flex;
  align-items: stretch;
  background: linear-gradient(#e8e8e8, #dedede 60%, #d2d2d2);
  border-bottom: 1px solid #777;
  button { width: 26px; display: flex; align-items: center; justify-content: center; border-right: 1px solid #888; }
  h3 { margin: 0; padding-left: 5px; font-size: 18px; line-height: 24px; font-weight: 700; }
`;
const DetailBand = styled.div`height: 31px; flex: none; background: #cacaca; border-bottom: 1px solid #888;`;
const DetailGap = styled.div`height: 34px; flex: none; background: #e8e8e8;`;
const DetailList = styled.div`flex: 1; min-height: 0; overflow: hidden;`;
const DetailTable = styled.table`
  width: 100%;
  border-collapse: separate;
  border-spacing: 0;
  table-layout: fixed;
  th {
    height: 24px;
    padding: 0 4px;
    font-weight: 400;
    font-size: 15px;
    line-height: 20px;
    text-align: left;
    background: linear-gradient(#dedede, #e8e8e8 40%, #c8c8c8 55%, #e0e0e0);
    border: 1px solid #b0b0b0;
    border-left: 0;
  }
  td { height: 24px; padding: 0; border-bottom: 2px solid #fff; }
`;

/* ---------- editor ---------- */

const Editor = styled.section`
  display: flex;
  flex-direction: column;
  min-width: 0;
  min-height: 0;
  border-left: 4px solid #1c2232;
  border-right: 4px solid #1c2232;
`;
const EditorHead = styled.div`
  height: 34px;
  flex: none;
  display: flex;
  align-items: center;
  gap: 13px;
  padding: 0 4px 0 6px;
  background: #2b3149;
  border-bottom: 4px solid #eceef4;
  color: #f0f0f0;
  font-size: 17px;
  font-weight: 600;
  white-space: nowrap;
  b { font-size: 18px; }
`;
const HeadTools = styled.div`display: flex; margin-left: auto; gap: 3px;`;
const EditorBand = styled.div`height: 31px; flex: none; background: #cacaca; border-bottom: 1px solid #888;`;
const FormatBar = styled.div`
  height: 35px;
  flex: none;
  display: flex;
  align-items: center;
  padding: 0 0 1px 7px;
  background: #e9e9e9;
`;
const FontBox = styled.div`
  width: 140px;
  height: 22px;
  flex: none;
  display: flex;
  margin-right: 10px;
  background: #fff;
  border: 1px solid #888;
  input { flex: 1; min-width: 0; font-size: 15px; line-height: 20px; }
  button { width: 22px; display: flex; align-items: center; justify-content: center; border-left: 1px solid #888; background: #e0e0e0; }
`;
const FormatSpace = styled.span`width: 6px; flex: none;`;
const SplitButton = styled.button`
  width: 44px;
  height: 26px;
  flex: none;
  display: flex;
  align-items: center;
  gap: 4px;
  padding-left: 4px;
`;
const Stage = styled.div`
  flex: 1;
  min-height: 0;
  display: grid;
  grid-template-columns: minmax(0, 1fr) 21px;
  grid-template-rows: minmax(0, 1fr);
`;
const Canvas = styled.div`
  min-height: 0;
  overflow: hidden;
  background: #748494;
  padding: 32px 0 0 56px;
`;
const Device = styled.div`display: flex;`;
const Screen = styled.div`
  position: relative;
  width: 1000px;
  height: 600px;
  flex: none;
  background: conic-gradient(from 270deg at 1px 1px, #222 90deg, transparent 0) 0 0 / 10px 10px, #b3b3b3;
`;
const TouchStrip = styled.div`
  height: 257px;
  width: 72px;
  flex: none;
  margin-top: 2px;
  padding: 12px 0 0;
  background: #a5a9aa;
  color: #748494;
  font: 68px/68px 'Liberation Sans', sans-serif;
  -webkit-text-stroke: 2px #748494;
  writing-mode: vertical-rl;
  white-space: nowrap;
`;
const SymbolicField = styled.button`
  position: absolute;
  left: 126px;
  top: 127px;
  width: 318px;
  height: 40px;
  display: flex;
  align-items: center;
  justify-content: flex-end;
  padding-right: 10px;
  background: #fff;
  border: 5px solid #5a606c;
  border-radius: 4px;
`;
const Coordinates = styled.div`
  position: absolute;
  left: 467px;
  top: 148px;
  width: 125px;
  height: 40px;
  padding-left: 8px;
  background: rgba(178, 178, 226, 0.8);
  color: #666;
  font-size: 15px;
  line-height: 18px;
  font-weight: 700;
`;
const ResizeCursor = styled.svg`position: absolute; left: 434px; top: 143px;`;
const Keys = styled.div`
  display: flex;
  gap: 35px;
  margin-top: 51px;
  padding-left: 18px;
`;
const Key = styled.button`
  width: 90px;
  height: 90px;
  flex: none;
  display: flex;
  align-items: flex-start;
  padding: 11px 0 0 13px;
  background: #7f7f7f;
  border: 6px solid;
  border-color: #fff #000 #000 #fff;
  outline: 1px solid #000;
  outline-offset: -1px;
  color: #000;
  font: 700 28px/28px 'Liberation Sans', sans-serif;
`;
const HBar = styled.div`
  height: 22px;
  flex: none;
  display: flex;
  background: #e4e4e4;
`;
const HScroll = styled(ScrollTrack)`flex: 1; margin-right: 8px;`;
const ZoomSlider = styled.label`
  width: 84px;
  margin: 0 19px 0 23px;
  display: flex;
  flex-direction: column;
  input {
    appearance: none;
    width: 84px;
    height: 16px;
    background: linear-gradient(#777, #777) 0 9px / 100% 1px no-repeat;
  }
  input::-webkit-slider-thumb {
    appearance: none;
    width: 9px;
    height: 14px;
    background: #d8d8d8;
    border: 1px solid #777;
    border-radius: 0 0 5px 5px;
  }
  span { height: 4px; background: repeating-linear-gradient(90deg, #333 0 2px, transparent 2px 6px); }
`;
const InfoBar = styled.div`
  height: 37px;
  flex: none;
  display: flex;
  align-items: flex-end;
  justify-content: flex-end;
  gap: 2px;
  padding-right: 3px;
  background: #afafaf;
  border-top: 4px solid #1c2232;
`;
const InfoTab = styled.button<{ $on?: boolean }>`
  width: ${p => (p.$on ? 102 : 92)}px;
  height: 28px;
  display: flex;
  align-items: center;
  gap: 4px;
  padding: 0 3px;
  font-size: 18px;
  font-weight: ${p => (p.$on ? 700 : 400)};
  color: ${p => (p.$on ? '#111' : '#444')};
  background: ${p => (p.$on ? '#f0f0f0' : '#c6c6c6')};
  border: 1px solid #777;
  border-bottom: 0;
  svg:last-child:not(:first-child) { margin-left: auto; }
`;
const InfoTools = styled.div`display: flex; align-items: center; gap: 3px; height: 33px; padding-left: 20px;`;

/* ---------- toolbox ---------- */

const Toolbox = styled.section`
  display: flex;
  flex-direction: column;
  min-height: 0;
  background: #eeeeee;
  border-right: 1px solid #2a3040;
`;
const OptionsTitle = styled.h3`
  height: 35px;
  flex: none;
  margin: 0;
  padding: 6px 7px 0;
  font-size: 19px;
  line-height: 26px;
  font-weight: 700;
  background: linear-gradient(#dedede, #f6f6f6 30%, #dcdcdc);
  border-bottom: 1px solid #888;
`;
const OptionsBar = styled.div`
  height: 34px;
  flex: none;
  display: flex;
  align-items: center;
  padding: 0 2px 0 3px;
  background: #e9e9e9;
`;
const Group = styled.div<{ $h?: number }>`
  display: flex;
  flex-direction: column;
  border-top: 3px solid #999;
  ${p => (p.$h ? css`height: ${p.$h}px; flex: none;` : css`flex: 1;`)}
`;
const Items = styled.div`
  display: grid;
  grid-template-columns: repeat(7, 1fr);
  grid-auto-rows: 52px;
  padding-right: 10px;
`;
const Item = styled.button`display: flex; align-items: center; justify-content: center;`;

const RightStrip = styled.aside`
  background: #afafaf;
  display: flex;
  flex-direction: column;
  gap: 3px;
  padding: 38px 4px 0 0;
`;
const SideTab = styled.button<{ $h: number; $on?: boolean }>`
  height: ${p => p.$h}px;
  flex: none;
  display: flex;
  flex-direction: column;
  align-items: center;
  gap: 6px;
  padding-top: 3px;
  background: ${p => (p.$on ? '#f4f4f4' : '#d4d4d4')};
  color: ${p => (p.$on ? '#111' : '#666')};
  border: 2px solid #777;
  border-left: 0;
  font-size: 18px;
  font-weight: ${p => (p.$on ? 600 : 400)};
  span { writing-mode: vertical-rl; text-orientation: sideways; line-height: 20px; }
`;

/* ---------- bottom bars ---------- */

const PortalBar = styled.footer`
  height: 36px;
  flex: none;
  display: flex;
  align-items: center;
  background: #1a1a1a;
  border-bottom: 1px solid #3a3a3a;
`;
const PortalLink = styled.button`
  width: 226px;
  display: flex;
  align-items: center;
  gap: 8px;
  padding-left: 40px;
  color: #eee;
  font-size: 17px;
  font-weight: 600;
  white-space: pre;
  b { font-size: 18px; }
`;
const OpenTabs = styled.div`display: flex; gap: 3px; flex: 1;`;
const OpenTab = styled.button<{ $on?: boolean }>`
  width: 142px;
  height: 26px;
  display: flex;
  align-items: center;
  gap: 5px;
  padding-left: 3px;
  background: ${p => (p.$on ? '#fff' : '#c4c4c4')};
  font-weight: ${p => (p.$on ? 700 : 400)};
  border: 1px solid #ddd;
  white-space: nowrap;
`;
const Switcher = styled(IconButton)`
  width: 26px;
  background: #c4c4c4;
  margin-right: 8px;
`;
const Status = styled.div`
  width: 412px;
  align-self: stretch;
  display: flex;
  align-items: center;
  gap: 6px;
  padding-left: 4px;
  color: #e4e4e4;
  border-left: 1px solid #555;
  white-space: nowrap;
`;
const Activity = styled.span`
  width: 35px;
  height: 16px;
  margin: 0 48px 0 auto;
  background:
    linear-gradient(#fff, #fff) 5px 0 / 4px 100% no-repeat,
    repeating-linear-gradient(90deg, #f05a20 0 4px, #7c2c10 4px 5px);
`;

const TaskBar = styled.footer`
  height: 50px;
  flex: none;
  display: flex;
  background: #0b0b0b;
  color: #fff;
`;
const Start = styled(IconButton)`width: 60px; height: 50px;`;
const TaskSearch = styled.label`
  width: 430px;
  flex: none;
  display: flex;
  align-items: center;
  gap: 12px;
  padding: 0 16px 0 11px;
  background: #f0f0f0;
  color: #333;
  input { flex: 1; min-width: 0; font-size: 19px; line-height: 28px; }
  input::placeholder { color: #333; opacity: 1; }
`;
const Ring = styled.span`width: 27px; height: 27px; border: 4px solid #111; border-radius: 50%;`;
const TaskApp = styled.button<{ $run?: boolean; $on?: boolean }>`
  width: 62px;
  height: 50px;
  display: flex;
  align-items: center;
  justify-content: center;
  background: ${p => (p.$on ? '#3c3c3c' : 'transparent')};
  ${p => p.$run && css`
    background-image: linear-gradient(#76b4e4, #76b4e4);
    background-repeat: no-repeat;
    background-size: ${p.$on ? '100%' : '51px'} 3px;
    background-position: center bottom;
  `}
`;
const Tray = styled.div`
  margin-left: auto;
  display: flex;
  align-items: center;
  gap: 10px;
`;
const TrayBtn = styled(IconButton)`width: 20px;`;
const PeopleBtn = styled(TrayBtn)`margin-right: 14px;`;
const Clock = styled.time`
  width: 78px;
  text-align: center;
  font-size: 16px;
  line-height: 23px;
`;
const Notices = styled.button`
  position: relative;
  width: 44px;
  height: 50px;
  display: flex;
  align-items: center;
  justify-content: center;
`;
const Count = styled.span`
  position: absolute;
  right: 2px;
  bottom: 5px;
  width: 20px;
  height: 20px;
  border: 1px solid #999;
  border-radius: 50%;
  background: #333;
  font-size: 14px;
  line-height: 18px;
  font-weight: 700;
  text-align: center;
`;
const ShowDesktop = styled.button`width: 6px; height: 50px; border-left: 1px solid #555;`;

const TileMark = ({ top, bottom, small }: { top: string; bottom: string; small?: boolean }) => (
  <Tile $small={small}><span>{top}</span><span>{bottom}</span></Tile>
);

/* ---------- data ---------- */

const menus = [['项目', 'P'], ['编辑', 'E'], ['视图', 'V'], ['插入', 'I'], ['在线', 'O'], ['选项', 'N'], ['工具', 'T'], ['窗口', 'W'], ['帮助', 'H']];

type Node = { t: string; i: string; l: number; open?: boolean; dark?: boolean; strong?: boolean; sel?: boolean };
const tree: Node[] = [
  { t: 'IO域', i: 'screen', l: 3 },
  { t: '按钮', i: 'screen', l: 3 },
  { t: '符号IO域', i: 'screen', l: 3, sel: true },
  { t: '基本对象', i: 'screen', l: 3 },
  { t: '快捷图标', i: 'screen', l: 3 },
  { t: '连接测试', i: 'startScreen', l: 3 },
  { t: '画面管理', i: 'folderTool', l: 2, open: true },
  { t: 'HMI 变量', i: 'folderTag', l: 2, open: true },
  { t: '连接', i: 'link', l: 2 },
  { t: 'HMI 报警', i: 'mail', l: 2 },
  { t: '配方', i: 'recipe', l: 2 },
  { t: '历史数据', i: 'history', l: 2 },
  { t: '计划任务', i: 'task', l: 2 },
  { t: '文本和图形列表', i: 'lists', l: 2 },
  { t: '用户管理', i: 'user', l: 2 },
  { t: '未分组的设备', i: 'devices', l: 1, open: true, dark: true, strong: true },
  { t: 'Security 设置', i: 'security', l: 1, open: true, dark: true },
  { t: '公共数据', i: 'common', l: 1, open: true, dark: true },
  { t: '文档设置', i: 'docs', l: 1, open: true, dark: true },
  { t: '语言和资源', i: 'language', l: 1, open: true, dark: true },
  { t: '在线访问', i: 'online', l: 0, open: true, dark: true },
  { t: '读卡器/USB 存储器', i: 'reader', l: 0, open: true, dark: true },
];

const sideTabs: [string, string, number][] = [
  ['工具箱', 'tabToolbox', 112], ['动画', 'tabAnim', 92], ['布局', 'tabLayout', 92],
  ['指令', 'tabInstr', 92], ['任务', 'tabTask', 92], ['库', 'tabLib', 73],
];

const Tool = ({ n, label }: { n: string; label: string }) => (
  <IconButton aria-label={label}><Ico n={n} /></IconButton>
);
const Split = ({ n, label, off }: { n: string; label: string; off?: boolean }) => (
  <SplitButton aria-label={label}><Ico n={n} /><Drop off={off} /></SplitButton>
);
const PaletteGroup = ({ title, h, items }: { title: string; h?: number; items: string[] }) => (
  <Group $h={h}>
    <SectionHead><button aria-label={`折叠${title}`}><Ico n="chevDown" s={18} /></button><h3>{title}</h3></SectionHead>
    <Items>{items.map(n => <Item key={n} aria-label={n}><BigIco n={n} /></Item>)}</Items>
  </Group>
);
const CrumbArrow = () => <svg width="6" height="10" viewBox="0 0 6 10" aria-hidden="true"><path d="M0 0l6 5-6 5z" fill="#fff" /></svg>;

export default function App() {
  return (
    <Window>
      <Global />
      <Gradients />
      <TitleBar>
        <TileMark top="TIA" bottom="V15" small />
        <TitleText><span>Siemens</span><span>-</span><span>C:\Users\dell\Desktop\</span></TitleText>
        <TitlePath>博途入门\入门\入门</TitlePath>
        <WinButton aria-label="最小化"><Ico n="minimize" s={12} /></WinButton>
        <WinButton aria-label="还原"><Ico n="float" s={14} /></WinButton>
        <WinButton aria-label="关闭"><Ico n="close" s={14} /></WinButton>
      </TitleBar>

      <TopArea>
        <Commands>
          <MenuBar>
            {menus.map(([t, k]) => <MenuItem key={k}>{t}<span>(<u>{k}</u>)</span></MenuItem>)}
          </MenuBar>
          <ToolBar>
            <Tool n="newProject" label="新建项目" />
            <Tool n="openProject" label="打开项目" />
            <TextButton><Ico n="save" />保存项目</TextButton>
            <Tool n="print" label="打印" />
            <Sep />
            <Tool n="cut" label="剪切" />
            <Tool n="copy" label="复制" />
            <Tool n="paste" label="粘贴" />
            <Tool n="cross" label="删除" />
            <Sep />
            <Split n="undo" label="撤销" />
            <Split n="redo" label="重做" off />
            <Sep />
            <Tool n="compile" label="编译" />
            <Tool n="download" label="下载到设备" />
            <Tool n="upload" label="从设备上传" />
            <Tool n="simulate" label="启动仿真" />
            <Tool n="runtime" label="启动运行系统" />
            <Sep />
            <TextButton><Ico n="plug" />转至在线</TextButton>
            <TextButton $off><Ico n="unplug" />转至离线</TextButton>
            <Sep />
            <Tool n="access" label="可访问的设备" />
            <Tool n="startCpu" label="启动 CPU" />
            <Tool n="stopCpu" label="停止 CPU" />
            <Sep />
            <Tool n="closeAll" label="交叉引用" />
            <Sep />
            <Tool n="splitH" label="水平拆分" />
            <Tool n="splitV" label="垂直拆分" />
            <Sep />
            <Search aria-label="在项目中搜索" placeholder="<在项目中搜索>" />
            <Tool n="binoculars" label="搜索" />
          </ToolBar>
        </Commands>
        <Brand><BrandName>Totally Integrated Automation</BrandName><BrandPortal>PORTAL</BrandPortal></Brand>
      </TopArea>

      <Workspace>
        <LeftStrip>
          <StripTop />
          <StripTab><span>可视化</span></StripTab>
        </LeftStrip>

        <TreePanel>
          <PanelHead $orange>
            <h2>项目树</h2>
            <HeadButton aria-label="自动折叠"><Ico n="autoHide" s={16} /></HeadButton>
            <HeadButton aria-label="折叠"><Ico n="left" s={18} /></HeadButton>
          </PanelHead>
          <TabRow><DeviceTab>设备</DeviceTab></TabRow>
          <TreeTools>
            <Tool n="addDevice" label="添加设备" />
            <Grow />
            <Sep />
            <Pressed aria-label="详细信息"><Ico n="details" /></Pressed>
            <Tool n="exportView" label="总览" />
          </TreeTools>
          <TreeGap />
          <TreeBody>
            <Tree>
              {tree.map(r => (
                <Row key={r.t} $tone={r.sel ? 'selected' : r.dark ? 'dark' : 'light'}>
                  <RowLabel $level={r.l} $strong={r.strong} $selected={r.sel}>
                    <Twisty>{r.open && <svg width="6" height="10" viewBox="0 0 6 10" aria-hidden="true"><path d="M0 0l6 5-6 5z" fill="#111" /></svg>}</Twisty>
                    <Ico n={r.i} />
                    <RowText>{r.t}</RowText>
                  </RowLabel>
                  <i /><i />
                </Row>
              ))}
            </Tree>
            <ScrollTrack>
              <ScrollBtn aria-label="向上滚动"><Arrow d={UP} /></ScrollBtn>
              <Thumb $before={172} $size={156} $after={152}><span><Grip /></span></Thumb>
              <ScrollBtn aria-label="向下滚动"><Arrow d={DOWN} /></ScrollBtn>
            </ScrollTrack>
          </TreeBody>
          <Detail>
            <SectionHead><button aria-label="折叠详细视图"><Ico n="chevDown" s={18} /></button><h3>详细视图</h3></SectionHead>
            <DetailBand />
            <DetailGap />
            <DetailList>
              <DetailTable>
                <colgroup><col width="24" /><col width="199" /><col /></colgroup>
                <thead><tr><th /><th>名称</th><th /></tr></thead>
                <tbody>{[1, 2, 3, 4, 5, 6].map(k => <tr key={k}><td /><td /><td /></tr>)}</tbody>
              </DetailTable>
            </DetailList>
          </Detail>
        </TreePanel>

        <Editor>
          <EditorHead>
            <b>入门</b><CrumbArrow />
            <span>HMI [KTP700 Basic PN]</span><CrumbArrow />
            <b>画面</b><CrumbArrow />
            <b>符号IO域</b>
            <HeadTools>
              <WinButton aria-label="最小化"><Ico n="minimize" s={16} /></WinButton>
              <WinButton aria-label="浮动"><Ico n="float" s={16} /></WinButton>
              <WinButton aria-label="最大化"><Ico n="maximize" s={16} /></WinButton>
              <WinButton aria-label="关闭"><Ico n="close" s={16} /></WinButton>
            </HeadTools>
          </EditorHead>
          <EditorBand />
          <FormatBar>
            <FontBox>
              <input aria-label="字体" defaultValue="宋体" />
              <button aria-label="选择字体"><Ico n="fontList" s={18} /></button>
            </FontBox>
            <ComboBox w={48} label="字号" value="16" />
            <FormatSpace />
            <Tool n="bold" label="粗体" />
            <Tool n="italic" label="斜体" />
            <Tool n="underline" label="下划线" />
            <Tool n="strike" label="删除线" />
            <Split n="grow" label="字体大小" />
            <Split n="align" label="对齐" />
            <Sep />
            <Split n="textColor" label="文本颜色" />
            <Split n="fill" label="背景颜色" />
            <Split n="pen" label="线条颜色" />
            <Sep />
            <Split n="lineWidth" label="线宽" />
            <Split n="dash" label="线型" />
            <Sep />
            <Split n="order" label="顺序" />
            <Split n="rotate" label="旋转" off />
            <Split n="alignObj" label="对齐对象" />
            <Split n="distribute" label="分布" off />
            <Split n="sameSize" label="相同尺寸" off />
            <Sep />
            <Tool n="brush" label="格式刷" />
            <Split n="layerUp" label="层" />
            <Tool n="zoomArea" label="缩放选区" />
          </FormatBar>
          <Stage>
            <Canvas>
              <Device>
                <Screen>
                  <SymbolicField aria-label="符号IO域">
                    <svg width="24" height="14" viewBox="0 0 24 14" aria-hidden="true"><path d="M2 1h20L12 12z" fill="none" stroke="#777" strokeWidth="2" /></svg>
                  </SymbolicField>
                  <Coordinates>x/y:</Coordinates>
                  <ResizeCursor width="23" height="12" viewBox="0 0 23 12" aria-hidden="true">
                    <path d="M1 6l5-5v3h11V1l5 5-5 5V8H6v3z" fill="#fff" stroke="#222" />
                  </ResizeCursor>
                </Screen>
                <TouchStrip>TOUCH</TouchStrip>
              </Device>
              <Keys>{[1, 2, 3, 4, 5, 6, 7, 8].map(k => <Key key={k}>F{k}</Key>)}</Keys>
            </Canvas>
            <ScrollTrack>
              <ScrollBtn aria-label="向上滚动"><Arrow d={UP} /></ScrollBtn>
              <Thumb $before={96} $size={533} $after={70}><span><Grip /></span></Thumb>
              <ScrollBtn aria-label="向下滚动"><Arrow d={DOWN} /></ScrollBtn>
            </ScrollTrack>
          </Stage>
          <HBar>
            <HScroll $row>
              <ScrollBtn aria-label="向左滚动"><Arrow d={LEFT} /></ScrollBtn>
              <Thumb $row $before={61} $size={598} $after={69}><span><Grip row /></span></Thumb>
              <ScrollBtn aria-label="向右滚动"><Arrow d={RIGHT} /></ScrollBtn>
            </HScroll>
            <ComboBox w={194} label="缩放" value="100%" />
            <ZoomSlider><input type="range" aria-label="缩放比例" defaultValue={32} /><span /></ZoomSlider>
            <IconButton $w={20} aria-label="适合窗口"><Ico n="fitView" s={18} /></IconButton>
          </HBar>
          <InfoBar>
            <InfoTab><Ico n="properties" />属性</InfoTab>
            <InfoTab $on><Ico n="info" />信息<Ico n="infoBadge" s={18} /></InfoTab>
            <InfoTab><Ico n="diagnose" />诊断</InfoTab>
            <InfoTools>
              <WinButton aria-label="浮动"><Ico n="float" s={16} /></WinButton>
              <WinButton aria-label="排列"><Ico n="rows" s={16} /></WinButton>
              <WinButton aria-label="展开"><Ico n="up" s={16} /></WinButton>
            </InfoTools>
          </InfoBar>
        </Editor>

        <Toolbox>
          <PanelHead>
            <h2>工具箱</h2>
            <HeadButton aria-label="浮动"><Ico n="float" s={16} /></HeadButton>
            <HeadButton aria-label="自动折叠"><Ico n="autoHideR" s={16} /></HeadButton>
            <HeadButton aria-label="折叠"><Ico n="right" s={18} /></HeadButton>
          </PanelHead>
          <OptionsTitle>选项</OptionsTitle>
          <OptionsBar>
            <Tool n="pointer" label="选择" />
            <Tool n="stamp" label="图章" />
            <Tool n="wrench" label="设置" />
            <Tool n="tableView" label="表格" />
            <FormatSpace />
            <ComboBox w={150} label="样式" value="深色默认值" />
            <Grow />
            <Tool n="pane" label="窗格" />
          </OptionsBar>
          <PaletteGroup title="基本对象" h={148} items={['line', 'ellipse', 'circle', 'rect', 'text', 'picture']} />
          <PaletteGroup title="元素" h={218} items={['ioField', 'button', 'symbolic', 'graphicIo', 'dateTime', 'bar', 'toggle']} />
          <PaletteGroup title="控件" items={['alarm', 'trend', 'users', 'browser', 'recipeView', 'diagView']} />
          <Group $h={30}>
            <SectionHead><button aria-label="展开图形"><Ico n="chevRight" s={18} /></button><h3>图形</h3></SectionHead>
          </Group>
        </Toolbox>

        <RightStrip>
          {sideTabs.map(([t, i, h], k) => <SideTab key={t} $h={h} $on={k === 0}><Ico n={i} /><span>{t}</span></SideTab>)}
        </RightStrip>
      </Workspace>

      <PortalBar>
        <PortalLink><Ico n="left" s={18} /><span>Portal  <b>视图</b></span></PortalLink>
        <OpenTabs>
          <OpenTab><Ico n="overview" />总览</OpenTab>
          <OpenTab><Ico n="screen" />按钮</OpenTab>
          <OpenTab><Ico n="lists" />文本和图形...</OpenTab>
          <OpenTab><Ico n="database" />DB_按钮 (DB3)</OpenTab>
          <OpenTab $on><Ico n="screen" />符号IO域</OpenTab>
        </OpenTabs>
        <Switcher aria-label="编辑器列表"><Ico n="switcher" s={22} /></Switcher>
        <Status><Ico n="check" />已通过地址 IP=192.168.0.1 连接到 P...<Activity /></Status>
      </PortalBar>

      <TaskBar>
        <Start aria-label="开始"><Ico n="windows" /></Start>
        <TaskSearch>
          <Ring />
          <input placeholder="在这里输入你要搜索的内容" aria-label="在这里输入你要搜索的内容" />
          <Ico n="mic" />
        </TaskSearch>
        <TaskApp aria-label="任务视图"><Ico n="taskView" /></TaskApp>
        <TaskApp aria-label="文件资源管理器"><Ico n="explorer" s={28} /></TaskApp>
        <TaskApp aria-label="Edge"><Ico n="edge" s={26} /></TaskApp>
        <TaskApp $run aria-label="PLCSIM"><TileMark top="PLC" bottom="SIM" /></TaskApp>
        <TaskApp $run aria-label="Chrome"><Ico n="chrome" s={28} /></TaskApp>
        <TaskApp $run $on aria-label="TIA Portal"><TileMark top="TIA" bottom="V15" /></TaskApp>
        <TaskApp $run aria-label="OBS"><Ico n="obs" s={28} /></TaskApp>
        <Tray>
          <PeopleBtn aria-label="人脉"><Ico n="people" /></PeopleBtn>
          <TrayBtn aria-label="显示隐藏的图标"><Ico n="caret" s={18} /></TrayBtn>
          <TrayBtn aria-label="OneDrive"><Ico n="cloud" /></TrayBtn>
          <TrayBtn aria-label="电源"><Ico n="battery" /></TrayBtn>
          <TrayBtn aria-label="网络"><Ico n="wifi" s={18} /></TrayBtn>
          <TrayBtn aria-label="音量"><Ico n="volume" /></TrayBtn>
          <TrayBtn>中</TrayBtn>
          <Clock>21:33<br />2020/6/19</Clock>
          <Notices aria-label="通知"><Ico n="notify" /><Count>5</Count></Notices>
          <ShowDesktop aria-label="显示桌面" />
        </Tray>
      </TaskBar>
    </Window>
  );
}
